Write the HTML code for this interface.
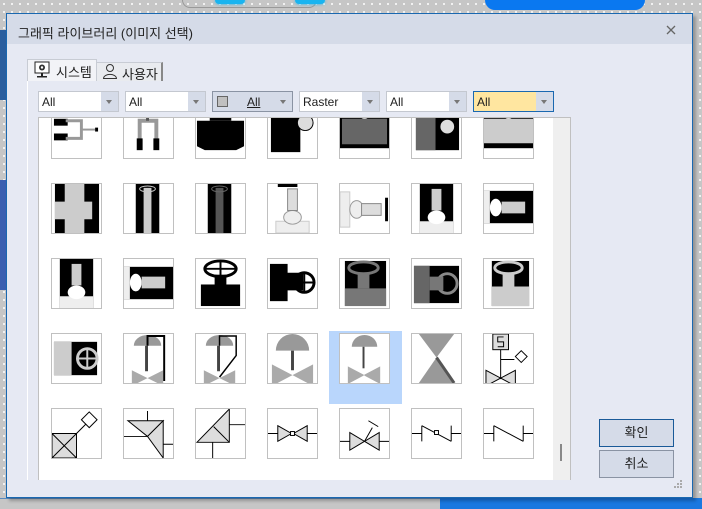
<!DOCTYPE html>
<html><head><meta charset="utf-8"><style>
*{margin:0;padding:0;box-sizing:border-box}
body{width:702px;height:509px;overflow:hidden;background:#c6c6c6;position:relative;font-family:"Liberation Sans","Noto Sans CJK KR",sans-serif;font-size:12px;color:#1e1e1e;
background-image:radial-gradient(circle,#fff 0.8px,transparent 1px);background-size:8px 8px}
.abs{position:absolute}
#dlg{left:6px;top:13px;width:687px;height:485px;background:#e6e9f3;border:1px solid #1a68b0;box-shadow:3px 3px 3px rgba(0,0,0,.25)}
#title{left:0;top:0;width:685px;height:30px;background:#d5dbe8}
.combo{height:21px;background:#fff;border:1px solid #c4c8d0;top:91px}
.combo span{position:absolute;left:3px;top:3px;font-size:12px}
.combo i{position:absolute;right:0;top:0;width:17px;height:19px;background:#d5dbe8}
.combo i:after{content:"";position:absolute;left:5px;top:8px;border-left:3.5px solid transparent;border-right:3.5px solid transparent;border-top:4px solid #777}
.th{position:absolute;width:51px;height:51px;border:1px solid #c0c0c0;background:#fff;overflow:hidden}
.th svg{position:absolute;left:0;top:0;width:49px;height:49px}
.btn{position:absolute;left:599px;width:75px;height:28px;background:#d5dbe8;border:1px solid #8a93a3;text-align:center;line-height:25px;font-size:13px}
</style></head><body>
<div class="abs" style="left:0;top:30px;width:7px;height:70px;background:#2a5e9e"></div>
<div class="abs" style="left:0;top:180px;width:7px;height:110px;background:#3a5fb0"></div>
<div class="abs" style="left:540px;top:0;width:78px;height:8px;border:1px solid #999;border-top:none;border-radius:0 0 10px 10px"></div>
<div class="abs" style="left:182px;top:0;width:135px;height:8px;border:1px solid #999;border-top:none;border-radius:0 0 10px 10px"></div>
<div class="abs" style="left:215px;top:0;width:30px;height:4px;background:#19b4f0;border-radius:0 0 10px 10px;box-shadow:0 0 3px #19b4f0"></div>
<div class="abs" style="left:295px;top:0;width:30px;height:4px;background:#19b4f0;border-radius:0 0 10px 10px;box-shadow:0 0 3px #19b4f0"></div>
<div class="abs" style="left:485px;top:0;width:160px;height:10px;background:#0a78f0;border-radius:0 0 30px 30px"></div>
<div class="abs" style="left:0;top:498px;width:702px;height:11px;background:#1a78e0"></div>
<div class="abs" style="left:0;top:498px;width:440px;height:11px;background:#c6c6c6;border-top:1px solid #5a8abf"></div>

<div id="dlg" class="abs">
 <div id="title" class="abs"><span class="abs" style="left:11px;top:9px;font-size:13px;color:#222">그래픽 라이브러리 (이미지 선택)</span>
  <svg class="abs" style="left:659px;top:11px" width="10" height="10"><path d="M1 1l8 8M9 1l-8 8" stroke="#666" stroke-width="1.3"/></svg></div>
</div>
<div class="abs" style="left:27px;top:80px;width:1px;height:400px;background:#fff"></div>
<div class="abs" style="left:27px;top:59px;width:70px;height:22px;background:#f2f3f7;border:1px solid #c8ccd4;border-bottom:none"></div>
<div class="abs" style="left:96px;top:62px;width:67px;height:19px;background:#e9ebef;border:1px solid #c8ccd4;border-bottom:none;border-right:2px solid #888"></div>
<svg class="abs" style="left:34px;top:61px" width="16" height="17" viewBox="0 0 16 17"><rect x="1" y="1" width="14" height="11" fill="#fff" stroke="#222"/><circle cx="8" cy="6.5" r="3" fill="#333"/><circle cx="8" cy="6.5" r="1.2" fill="#fff"/><rect x="7" y="12" width="2" height="3" fill="#222"/><rect x="3" y="15" width="10" height="1.5" fill="#222"/></svg>
<span class="abs" style="left:56px;top:62px;font-size:13px">시스템</span>
<svg class="abs" style="left:102px;top:63px" width="16" height="16" viewBox="0 0 16 16"><circle cx="8" cy="5" r="3.5" fill="none" stroke="#333"/><path d="M1.5 15.5 C2 10 14 10 14.5 15.5 Z" fill="none" stroke="#333"/></svg>
<span class="abs" style="left:122px;top:64px;font-size:13px">사용자</span>
<div class="abs combo" style="left:38px;width:81px"><span>All</span><i></i></div>
<div class="abs combo" style="left:125px;width:81px"><span>All</span><i></i></div>
<div class="abs combo" style="left:212px;width:81px;background:#d5dbe8;border-color:#8a93a3"><b class="abs" style="left:4px;top:4px;width:11px;height:11px;background:#c0c0c0;border:1px solid #666"></b><span style="left:34px;text-decoration:underline">All</span><i style="background:none"></i></div>
<div class="abs combo" style="left:299px;width:81px"><span>Raster</span><i></i></div>
<div class="abs combo" style="left:386px;width:81px"><span>All</span><i></i></div>
<div class="abs combo" style="left:473px;width:81px;border-color:#1a68b0;background:#ffe6a0"><span>All</span><i></i></div>
<div class="abs" style="left:38px;top:117px;width:533px;height:363px;background:#fff;border:1px solid #c0c0c0;border-bottom:none;overflow:hidden">
 <div class="abs" style="left:514px;top:0;width:17px;height:363px;background:#efefef"></div>
 <div class="abs" style="left:521px;top:326px;width:2px;height:17px;background:#888"></div>
 <div class="abs" style="left:290px;top:213px;width:73px;height:73px;background:#b9d6fc"></div>
 <div id="grid"></div>
</div>
<div class="btn" style="top:419px;border-color:#1a5a98">확인</div>
<div class="btn" style="top:450px">취소</div>
<svg class="abs" style="left:673px;top:479px" width="10" height="10"><g fill="#aaa"><rect x="7" y="1" width="2" height="2"/><rect x="4" y="4" width="2" height="2"/><rect x="7" y="4" width="2" height="2"/><rect x="1" y="7" width="2" height="2"/><rect x="4" y="7" width="2" height="2"/><rect x="7" y="7" width="2" height="2"/></g></svg>

<script>
var S=[
'<rect x="2" y="10" width="14" height="7"/><rect x="2" y="25" width="14" height="7"/><path d="M14 12h16v18H14" fill="none" stroke="#999" stroke-width="3"/><path d="M30 21h14" stroke="#999" stroke-width="2"/><rect x="44" y="19" width="3" height="4"/>',
'<path d="M16 38V12h17v26" fill="none" stroke="#999" stroke-width="4"/><rect x="13" y="30" width="6" height="12"/><rect x="30" y="30" width="6" height="12"/><path d="M24 0v12" stroke="#555" stroke-width="3"/>',
'<path d="M1 12h48v26l-8 4H9L1 38z"/><path d="M14 4h22v8H14z"/>',
'<path d="M3 0h30v44H3z"/><circle cx="38" cy="14" r="8" fill="#ddd" stroke="#000"/>',
'<rect x="0" y="0" width="50" height="40"/><path d="M2 10h46v26H2z" fill="#666"/><circle cx="25" cy="4" r="6" fill="#fff"/>',
'<rect x="4" y="0" width="44" height="42"/><path d="M4 0h20v42H4z" fill="#666"/><circle cx="36" cy="18" r="7" fill="#ddd"/>',
'<rect x="0" y="0" width="50" height="40"/><path d="M0 10h50v25H0z" fill="#ccc"/><circle cx="25" cy="4" r="6" fill="#fff"/>',
'<rect x="3" y="0" width="45" height="50"/><path d="M3 18h10V0h20v18h8v18H33v14H13V36H3z" fill="#ccc"/>',
'<rect x="12" y="0" width="24" height="50"/><path d="M20 4h8v46h-8z" fill="#ccc"/><ellipse cx="24" cy="5" rx="8" ry="3" fill="none" stroke="#ccc"/>',
'<rect x="12" y="0" width="24" height="50"/><path d="M20 4h8v46h-8z" fill="#555"/><ellipse cx="24" cy="5" rx="8" ry="3" fill="none" stroke="#666"/>',
'<path d="M10 0h20v3H10z"/><path d="M8 38h34v12H8z" fill="#eee" stroke="#ccc"/><ellipse cx="25" cy="34" rx="9" ry="7" fill="#eee" stroke="#999"/><path d="M20 5h10v22H20z" fill="#ddd" stroke="#888"/>',
'<path d="M0 8h10v36H0z" fill="#eee" stroke="#ccc"/><ellipse cx="17" cy="26" rx="7" ry="9" fill="#eee" stroke="#999"/><path d="M22 20h20v12H22z" fill="#ddd" stroke="#888"/><rect x="46" y="14" width="3" height="24"/>',
'<rect x="8" y="0" width="34" height="50"/><path d="M8 38h34v12H8z" fill="#eee"/><ellipse cx="25" cy="34" rx="9" ry="7" fill="#fff"/><path d="M20 5h10v22H20z" fill="#ccc"/>',
'<rect x="0" y="7" width="50" height="33"/><path d="M0 7h6v33H0z" fill="#eee"/><ellipse cx="12" cy="24" rx="6" ry="9" fill="#fff"/><path d="M18 18h24v12H18z" fill="#ccc"/>',
'<rect x="8" y="0" width="34" height="50"/><path d="M8 38h34v12H8z" fill="#eee"/><ellipse cx="25" cy="34" rx="9" ry="7" fill="#fff"/><path d="M20 5h10v22H20z" fill="#ccc"/>',
'<rect x="0" y="8" width="50" height="33"/><path d="M0 8h6v33H0z" fill="#eee"/><ellipse cx="12" cy="24" rx="6" ry="9" fill="#fff"/><path d="M18 18h24v12H18z" fill="#ccc"/>',
'<ellipse cx="25" cy="10" rx="16" ry="8" fill="none" stroke="#000" stroke-width="3"/><path d="M9 10h32M25 2v16" stroke="#000" stroke-width="2"/><path d="M19 16h12v12H19z"/><rect x="5" y="26" width="40" height="22"/>',
'<rect x="2" y="5" width="18" height="38"/><path d="M18 14h18v18H18z"/><circle cx="37" cy="24" r="10" fill="none" stroke="#000" stroke-width="3"/><path d="M27 24h20M37 14v20" stroke="#000" stroke-width="2"/>',
'<rect x="5" y="2" width="42" height="46"/><ellipse cx="24" cy="9" rx="15" ry="6" fill="none" stroke="#777" stroke-width="3"/><path d="M18 14h12v16H18z" fill="#777"/><path d="M5 30h42v18H5z" fill="#777"/>',
'<rect x="2" y="7" width="46" height="38"/><path d="M2 7h16v38H2z" fill="#666"/><circle cx="36" cy="25" r="10" fill="none" stroke="#888" stroke-width="3"/><path d="M18 18h14v14H18z" fill="#777"/>',
'<rect x="8" y="2" width="38" height="46"/><ellipse cx="25" cy="9" rx="14" ry="6" fill="none" stroke="#ccc" stroke-width="3"/><path d="M19 14h12v16H19z" fill="#ccc"/><path d="M8 28h38v20H8z" fill="#ccc"/>',
'<rect x="2" y="8" width="44" height="34"/><path d="M2 8h18v34H2z" fill="#ccc"/><circle cx="36" cy="25" r="10" fill="none" stroke="#ccc" stroke-width="3"/><path d="M26 25h20M36 15v20" stroke="#ccc" stroke-width="2"/>',
'<path d="M10 12a14 11 0 0 1 28 0z" fill="#999"/><path d="M23 12v26" stroke="#444" stroke-width="3"/><path d="M8 37l16 8-16 8zM40 37l-16 8 16 8z" fill="#aaa"/><path d="M24 12V2h17v46" fill="none" stroke="#000" stroke-width="2"/>',
'<path d="M10 12a14 11 0 0 1 28 0z" fill="#999"/><path d="M23 12v26" stroke="#444" stroke-width="3"/><path d="M8 37l16 8-16 8zM40 37l-16 8 16 8z" fill="#aaa"/><path d="M24 12V2h17v20L24 44" fill="none" stroke="#000" stroke-width="1.5"/>',
'<path d="M8 17a17 17 0 0 1 34 0z" fill="#999"/><path d="M25 17v20" stroke="#444" stroke-width="3"/><path d="M4 31l21 11-21 11zM46 31l-21 11 21 11z" fill="#aaa"/>',
'<path d="M12 13a13 12 0 0 1 26 0z" fill="#999"/><path d="M24 13v22" stroke="#444" stroke-width="2"/><path d="M8 33l17 9-17 9zM41 33l-17 9 17 9z" fill="#aaa"/>',
'<path d="M7 0h36L25 24z" fill="#999"/><path d="M7 50h36L25 24z" fill="#999"/><path d="M25 24l18 26" stroke="#555" stroke-width="3"/>',
'<rect x="9" y="0" width="16" height="16" fill="#ddd" stroke="#000"/><path d="M20 3h-6v5h6v5h-6" fill="none" stroke="#000"/><path d="M17 16v30M17 26h14" stroke="#000"/><path d="M38 17l6 6-6 6-6-6z" fill="#fff" stroke="#000"/><path d="M2 37l15 8-15 8zM32 37l-15 8 15 8z" fill="#ddd" stroke="#000"/>',
'<path d="M0 25h25v25H0z" fill="#ddd" stroke="#000"/><path d="M0 25l25 25M25 25L0 50M25 25l14-14" stroke="#000"/><path d="M38 3l8 8-8 8-8-8z" fill="#fff" stroke="#000"/>',
'<path d="M4 12h36L24 28z" fill="#ddd" stroke="#000"/><path d="M40 12v38L24 28z" fill="#ddd" stroke="#000"/><path d="M24 2v10M0 28h24M40 36h10" stroke="#000"/>',
'<path d="M34 0v34H1z" fill="#ddd" stroke="#000"/><path d="M34 34L18 18M34 16h16M17 34v16" stroke="#000"/>',
'<path d="M10 17l14 8-14 8zM40 17l-14 8 14 8z" fill="#ddd" stroke="#000"/><rect x="23" y="23" width="4" height="4" fill="#fff" stroke="#000"/><path d="M0 25h10M40 25h10" stroke="#000"/>',
'<path d="M10 24l15 9-15 9zM40 24l-15 9 15 9z" fill="#ddd" stroke="#000"/><path d="M0 33h10M40 33h10M25 33l8-14M29 12l10 6" stroke="#000"/>',
'<path d="M0 25h10M10 17v16M10 17l30 16M40 17v16M40 25h10" fill="none" stroke="#000"/><rect x="23" y="22" width="4" height="4" fill="#fff" stroke="#000"/>',
'<path d="M0 25h10M10 17v16M10 17l30 16M40 17v16M40 25h10" fill="none" stroke="#000"/>'
];
var h='',tops=[-10,65,140,215,290];
for(var i=0;i<35;i++){var r=Math.floor(i/7),c=i%7;
h+='<div class="th" style="left:'+(12+c*72)+'px;top:'+tops[r]+'px"><svg viewBox="0 0 50 50">'+S[i]+'</svg></div>';}
document.getElementById('grid').innerHTML=h;
</script>
</body></html>
